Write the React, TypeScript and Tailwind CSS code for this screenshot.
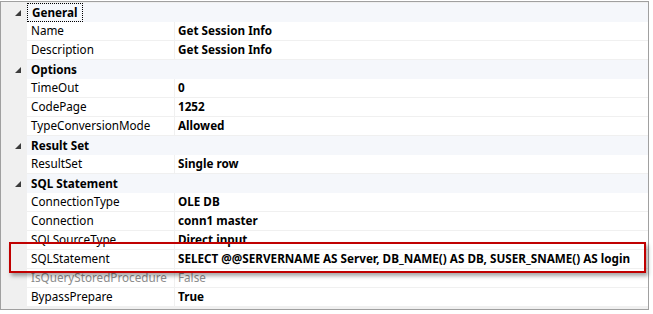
import React from "react";

type Prop = { name: string; value: string; muted?: boolean };
type Category = { title: string; props: Prop[] };

const data: Category[] = [
  {
    title: "General",
    props: [
      { name: "Name", value: "Get Session Info" },
      { name: "Description", value: "Get Session Info" },
    ],
  },
  {
    title: "Options",
    props: [
      { name: "TimeOut", value: "0" },
      { name: "CodePage", value: "1252" },
      { name: "TypeConversionMode", value: "Allowed" },
    ],
  },
  {
    title: "Result Set",
    props: [{ name: "ResultSet", value: "Single row" }],
  },
  {
    title: "SQL Statement",
    props: [
      { name: "ConnectionType", value: "OLE DB" },
      { name: "Connection", value: "conn1 master" },
      { name: "SQLSourceType", value: "Direct input" },
      {
        name: "SQLStatement",
        value: "SELECT @@SERVERNAME AS Server, DB_NAME() AS DB, SUSER_SNAME() AS login",
      },
      { name: "IsQueryStoredProcedure", value: "False", muted: true },
      { name: "BypassPrepare", value: "True" },
    ],
  },
];

function Expander() {
  return (
    <svg width="6" height="6" viewBox="0 0 6 6" className="ml-[14px]">
      <polygon points="6,0 6,6 0,6" fill="#3c3c3c" />
    </svg>
  );
}

export default function App() {
  return (
    <div
      className="relative h-[314px] w-[653px] bg-white pt-px text-[11.7px] leading-none text-black"
      style={{ fontFamily: '"Noto Sans", "Liberation Sans", sans-serif' }}
    >
      <div className="h-[309px] w-[649px] border border-[#a0a0a0] bg-[#f0f0f0] pt-px">
        {data.map((cat, ci) => (
          <div key={cat.title}>
            {/* Category header */}
            <div className="flex h-[19px] items-center">
              <div className="flex w-[26px] shrink-0 items-center">
                <Expander />
              </div>
              <div className="flex h-full flex-1 items-center bg-[#f5f7fb]">
                <span
                  className={`flex h-full items-center px-[4px] font-bold ${
                    ci === 0 ? "border border-dotted border-black" : ""
                  }`}
                >
                  {cat.title}
                </span>
              </div>
            </div>
            {/* Properties */}
            {cat.props.map((p) => (
              <div key={p.name} className="flex h-[19px]">
                <div className="w-[26px] shrink-0" />
                <div className="flex flex-1 border-b border-[#f0f0f0] bg-white">
                  <div
                    className={`flex w-[148px] shrink-0 items-center border-r border-[#f0f0f0] pl-[4px] ${
                      p.muted ? "text-[#8d8d8d]" : ""
                    }`}
                  >
                    {p.name}
                  </div>
                  <div
                    className={`flex flex-1 items-center pl-[3px] ${
                      p.muted ? "text-[#8d8d8d]" : "font-bold"
                    }`}
                  >
                    {p.value}
                  </div>
                </div>
              </div>
            ))}
          </div>
        ))}
      </div>

      {/* Highlight box around SQLStatement */}
      <div className="absolute left-[9px] top-[242px] h-[31px] w-[637px] border-2 border-[#c00000] shadow-[2px_3px_4px_rgba(0,0,0,0.35)]" />
    </div>
  );
}
